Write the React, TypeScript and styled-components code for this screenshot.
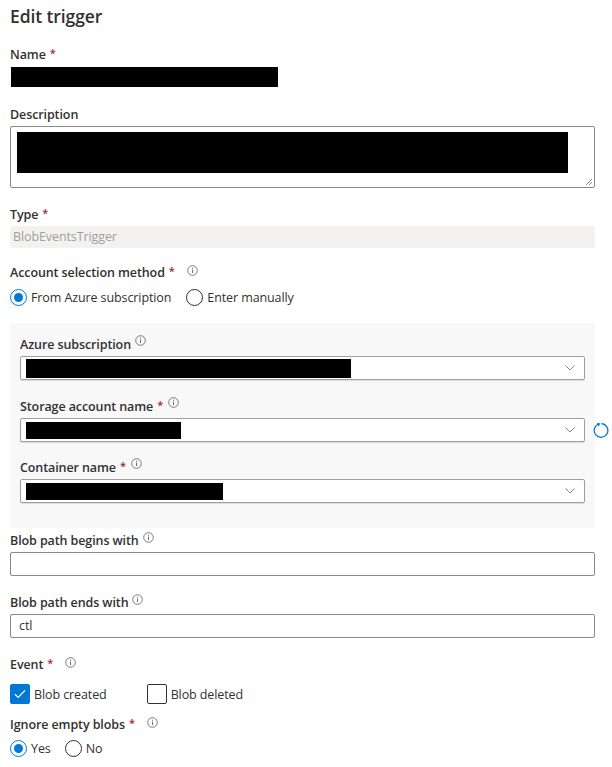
import styled, { createGlobalStyle } from "styled-components";

const GlobalStyle = createGlobalStyle`
    body {
        margin: 0;
        background: #ffffff;
        font-family: "Open Sans", "Noto Sans", sans-serif;
        color: #323130;
        letter-spacing: -0.1px;
    }
`;

const Page = styled.div`
    width: 585px;
    padding: 4px 0 0 10px;
`;

const Title = styled.h2`
    margin: 0 0 16px;
    font-size: 17.5px;
    font-weight: 600;
    line-height: 24px;
`;

const Field = styled.div<{ $mb?: number }>`
    margin-bottom: ${(p) => (p.$mb ?? 16)}px;
`;

const Label = styled.div`
    display: flex;
    align-items: center;
    height: 20px;
    margin-bottom: 2px;
    font-size: 12.5px;
    font-weight: 600;
    white-space: nowrap;
`;

const Star = styled.span`
    color: #a4262c;
    font-size: 11px;
    margin-left: 4px;
    align-self: flex-start;
    padding-top: 1px;
`;

const Info = styled.svg<{ $ml: number; $raise?: number }>`
    width: 11px;
    height: 11px;
    margin-left: ${(p) => p.$ml}px;
    position: relative;
    top: -${(p) => p.$raise ?? 2}px;
    flex: none;
`;

const Redact = styled.div<{ $w: number; $h: number }>`
    width: ${(p) => p.$w}px;
    height: ${(p) => p.$h}px;
    background: #000;
`;

const NameValue = styled.div`
    padding: 1px 0 0 1px;
`;

const TextArea = styled.div`
    position: relative;
    height: 62px;
    box-sizing: border-box;
    border: 1px solid #8a8886;
    border-radius: 2px;
    padding: 5px 6px;
`;

const Grip = styled.svg`
    position: absolute;
    right: 1px;
    bottom: 1px;
    width: 10px;
    height: 10px;
`;

const Disabled = styled.div`
    height: 22px;
    line-height: 22px;
    background: #f3f2f1;
    border-radius: 2px;
    padding: 0 3px;
    font-size: 12.5px;
    color: #a19f9d;
`;

const Options = styled.div<{ $gap: number; $mt?: number }>`
    display: flex;
    align-items: center;
    gap: ${(p) => p.$gap}px;
    height: 20px;
    margin-top: ${(p) => p.$mt ?? 5}px;
`;

const Option = styled.label`
    display: flex;
    align-items: center;
    gap: 4px;
    font-size: 12.5px;
    white-space: nowrap;
`;

const RadioCircle = styled.span<{ $on?: boolean }>`
    width: 17px;
    height: 17px;
    box-sizing: border-box;
    border-radius: 50%;
    border: 1px solid ${(p) => (p.$on ? "#0078d4" : "#323130")};
    display: flex;
    align-items: center;
    justify-content: center;
    &::after {
        content: "";
        width: 9px;
        height: 9px;
        border-radius: 50%;
        background: ${(p) => (p.$on ? "#0078d4" : "transparent")};
    }
`;

const CheckBox = styled.span<{ $on?: boolean }>`
    width: 20px;
    height: 20px;
    box-sizing: border-box;
    border-radius: 2px;
    border: 1px solid ${(p) => (p.$on ? "#0078d4" : "#323130")};
    background: ${(p) => (p.$on ? "#0078d4" : "#fff")};
    display: flex;
    align-items: center;
    justify-content: center;
`;

const Panel = styled.div`
    background: #f8f8f8;
    padding: 11px 10px 25px;
    margin-bottom: 2px;
`;

const SelectRow = styled.div<{ $extra?: boolean }>`
    display: flex;
    align-items: center;
    margin-right: ${(p) => (p.$extra ? -25 : 0)}px;
`;

const Select = styled.div`
    flex: 1;
    height: 24px;
    box-sizing: border-box;
    background: #fff;
    border: 1px solid #a19f9d;
    border-radius: 2px;
    box-shadow: 0 1px 1px rgba(0, 0, 0, 0.12);
    display: flex;
    align-items: center;
    justify-content: space-between;
    padding: 0 9px 0 5px;
`;

const Chevron = styled.svg`
    width: 10px;
    height: 6px;
`;

const Refresh = styled.svg`
    width: 17px;
    height: 17px;
    margin-left: 8px;
    flex: none;
`;

const Input = styled.div`
    height: 24px;
    box-sizing: border-box;
    border: 1px solid #8a8886;
    border-radius: 2px;
    padding: 0 8px;
    font-size: 12.5px;
    line-height: 22px;
`;

const InfoIcon = ({ ml, raise }: { ml: number; raise?: number }) => (
    <Info $ml={ml} $raise={raise} viewBox="0 0 11 11">
        <circle cx="5.5" cy="5.5" r="4.8" fill="none" stroke="#6f6d6b" strokeWidth="0.9" />
        <line x1="5.5" y1="4.6" x2="5.5" y2="8" stroke="#6f6d6b" strokeWidth="1" />
        <circle cx="5.5" cy="3.2" r="0.6" fill="#6f6d6b" />
    </Info>
);

const Down = () => (
    <Chevron viewBox="0 0 10 6">
        <path d="M0.5 0.5 L5 5 L9.5 0.5" fill="none" stroke="#8a8886" strokeWidth="1" />
    </Chevron>
);

const Radio = ({ on, text }: { on?: boolean; text: string }) => (
    <Option>
        <RadioCircle $on={on} />
        {text}
    </Option>
);

const Check = ({ on, text }: { on?: boolean; text: string }) => (
    <Option>
        <CheckBox $on={on}>
            {on && (
                <svg width="12" height="10" viewBox="0 0 12 10">
                    <path d="M1 5.2 L4.2 8.4 L11 1.4" fill="none" stroke="#fff" strokeWidth="1.3" />
                </svg>
            )}
        </CheckBox>
        {text}
    </Option>
);

const App = () => {
    return (
        <Page>
            <GlobalStyle />
            <Title>Edit trigger</Title>

            <Field $mb={17}>
                <Label>
                    Name<Star>*</Star>
                </Label>
                <NameValue>
                    <Redact $w={267} $h={20} />
                </NameValue>
            </Field>

            <Field>
                <Label>Description</Label>
                <TextArea>
                    <Redact $w={551} $h={41} />
                    <Grip viewBox="0 0 10 10">
                        <path d="M9 3 L3 9 M9 6 L6 9" stroke="#8a8886" strokeWidth="1" />
                    </Grip>
                </TextArea>
            </Field>

            <Field $mb={14}>
                <Label>
                    Type<Star>*</Star>
                </Label>
                <Disabled>BlobEventsTrigger</Disabled>
            </Field>

            <Field>
                <Label>
                    Account selection method<Star>*</Star>
                    <InfoIcon ml={12} />
                </Label>
                <Options $gap={15}>
                    <Radio on text="From Azure subscription" />
                    <Radio text="Enter manually" />
                </Options>
            </Field>

            <Panel>
                <Field>
                    <Label>
                        Azure subscription
                        <InfoIcon ml={4} raise={4} />
                    </Label>
                    <SelectRow>
                        <Select>
                            <Redact $w={325} $h={19} />
                            <Down />
                        </Select>
                    </SelectRow>
                </Field>
                <Field $mb={15}>
                    <Label>
                        Storage account name<Star>*</Star>
                        <InfoIcon ml={5} raise={4} />
                    </Label>
                    <SelectRow $extra>
                        <Select>
                            <Redact $w={155} $h={17} />
                            <Down />
                        </Select>
                        <Refresh viewBox="0 0 16 16">
                            <path
                                d="M5.6 1.9 A6.4 6.4 0 1 0 8 1.6"
                                fill="none"
                                stroke="#0078d4"
                                strokeWidth="1.2"
                            />
                            <path d="M3.6 0.6 L7 1.4 L5.2 4.3 Z" fill="#0078d4" />
                        </Refresh>
                    </SelectRow>
                </Field>
                <Field $mb={0}>
                    <Label>
                        Container name<Star>*</Star>
                        <InfoIcon ml={5} raise={4} />
                    </Label>
                    <SelectRow>
                        <Select>
                            <Redact $w={197} $h={17} />
                            <Down />
                        </Select>
                    </SelectRow>
                </Field>
            </Panel>

            <Field>
                <Label>
                    Blob path begins with
                    <InfoIcon ml={4} raise={3} />
                </Label>
                <Input />
            </Field>

            <Field>
                <Label>
                    Blob path ends with
                    <InfoIcon ml={4} raise={3} />
                </Label>
                <Input>ctl</Input>
            </Field>

            <Field $mb={10}>
                <Label>
                    Event<Star>*</Star>
                    <InfoIcon ml={12} />
                </Label>
                <Options $gap={40} $mt={10}>
                    <Check on text="Blob created" />
                    <Check text="Blob deleted" />
                </Options>
            </Field>

            <Field $mb={0}>
                <Label>
                    Ignore empty blobs<Star>*</Star>
                    <InfoIcon ml={12} />
                </Label>
                <Options $gap={14} $mt={4}>
                    <Radio on text="Yes" />
                    <Radio text="No" />
                </Options>
            </Field>
        </Page>
    );
};

export default App;
